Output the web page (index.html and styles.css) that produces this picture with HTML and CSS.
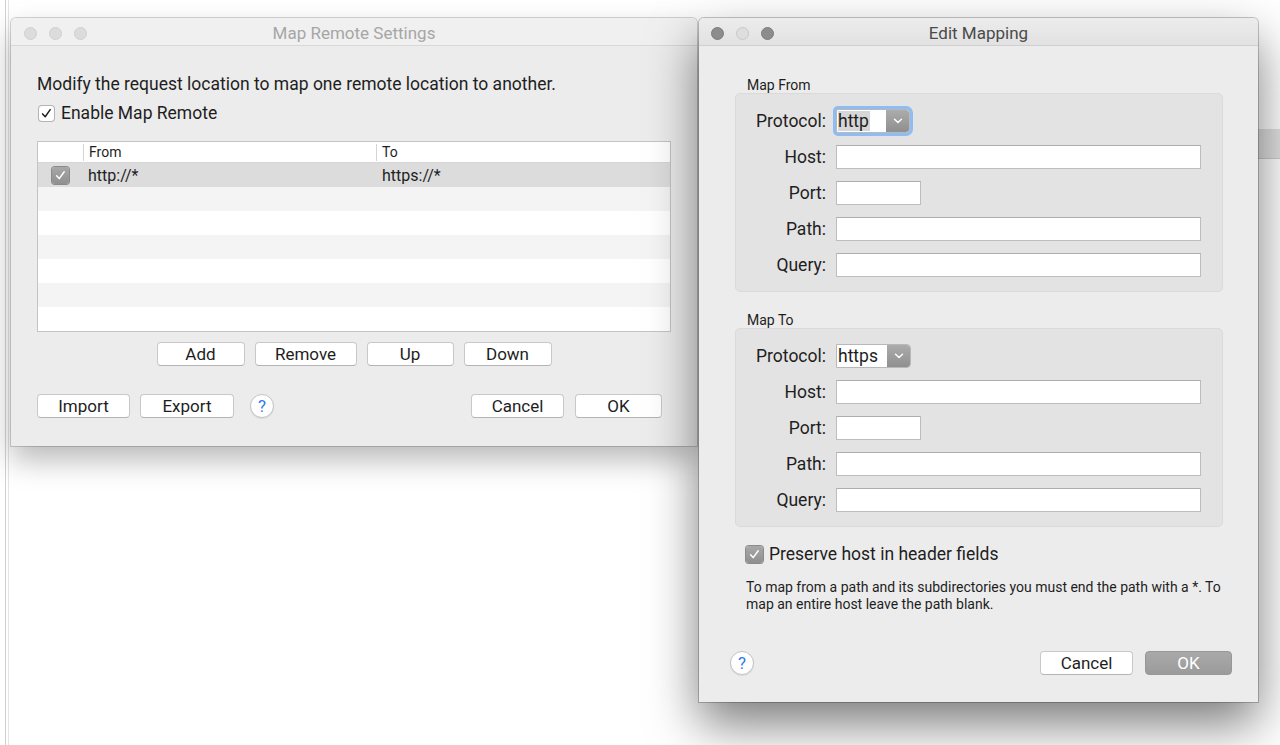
FILE: index.html
```html
<!DOCTYPE html>
<html>
<head>
    <meta charset="utf-8">
    <title>Map Remote Settings</title>
    <link rel="stylesheet" href="styles.css">
</head>
<body>
<div class="desktop">
    <div class="app-rail"></div>
    <div class="app-band"></div>

    <!-- back window -->
    <div class="window remote">
        <div class="titlebar inactive">
            <div class="lights"><span></span><span></span><span></span></div>
            <div class="title">Map Remote Settings</div>
            <div class="lights-spacer"></div>
        </div>
        <div class="content">
            <p class="intro">Modify the request location to map one remote location to another.</p>
            <div class="check">
                <span class="box plain">
                    <svg width="15" height="15" viewBox="0 0 15 15"><path d="M3.6 7.9 L6.2 10.7 L11.2 3.6" fill="none" stroke="#222" stroke-width="1.5" stroke-linecap="round" stroke-linejoin="round"/></svg>
                </span>
                <span>Enable Map Remote</span>
            </div>
            <div class="table">
                <div class="thead">
                    <div class="col-check"></div>
                    <div class="col-from">From</div>
                    <div class="col-to">To</div>
                </div>
                <div class="trow selected">
                    <div class="col-check">
                        <span class="box grey small">
                            <svg width="17" height="17" viewBox="0 0 17 17"><path d="M4.6 8.8 L7.2 11.6 L12.2 4.8" fill="none" stroke="#fff" stroke-width="1.5" stroke-linecap="round" stroke-linejoin="round"/></svg>
                        </span>
                    </div>
                    <div class="col-from">http://*</div>
                    <div class="col-to">https://*</div>
                </div>
                <div class="trow odd"></div>
                <div class="trow"></div>
                <div class="trow odd"></div>
                <div class="trow"></div>
                <div class="trow odd"></div>
                <div class="trow"></div>
            </div>
            <div class="list-buttons">
                <button class="btn w-add">Add</button>
                <button class="btn w-remove">Remove</button>
                <button class="btn w-up">Up</button>
                <button class="btn w-down">Down</button>
            </div>
            <div class="footer">
                <button class="btn w-import">Import</button>
                <button class="btn w-export">Export</button>
                <span class="help">?</span>
                <span class="grow"></span>
                <button class="btn w-cancel">Cancel</button>
                <button class="btn w-ok">OK</button>
            </div>
        </div>
    </div>

    <!-- front window -->
    <div class="window mapping">
        <div class="titlebar">
            <div class="lights modal"><span></span><span></span><span></span></div>
            <div class="title">Edit Mapping</div>
            <div class="lights-spacer"></div>
        </div>
        <div class="content">
            <div class="group-label first">Map From</div>
            <div class="group">
                <label>Protocol:</label>
                <div class="select focused">
                    <span class="value"><span class="hl">http</span></span>
                    <span class="arrow"><svg width="10" height="6" viewBox="0 0 10 6"><path d="M1.5 1.2 L5 4.6 L8.5 1.2" fill="none" stroke="#fff" stroke-width="1.4" stroke-linecap="round" stroke-linejoin="round"/></svg></span>
                </div>
                <label>Host:</label>
                <div class="field"></div>
                <label>Port:</label>
                <div class="field port"></div>
                <label>Path:</label>
                <div class="field"></div>
                <label>Query:</label>
                <div class="field"></div>
            </div>

            <div class="group-label">Map To</div>
            <div class="group">
                <label>Protocol:</label>
                <div class="select">
                    <span class="value">https</span>
                    <span class="arrow"><svg width="10" height="6" viewBox="0 0 10 6"><path d="M1.5 1.2 L5 4.6 L8.5 1.2" fill="none" stroke="#fff" stroke-width="1.4" stroke-linecap="round" stroke-linejoin="round"/></svg></span>
                </div>
                <label>Host:</label>
                <div class="field"></div>
                <label>Port:</label>
                <div class="field port"></div>
                <label>Path:</label>
                <div class="field"></div>
                <label>Query:</label>
                <div class="field"></div>
            </div>

            <div class="check preserve">
                <span class="box grey">
                    <svg width="17" height="17" viewBox="0 0 17 17"><path d="M4.6 8.8 L7.2 11.6 L12.2 4.8" fill="none" stroke="#fff" stroke-width="1.5" stroke-linecap="round" stroke-linejoin="round"/></svg>
                </span>
                <span>Preserve host in header fields</span>
            </div>
            <p class="note">To map from a path and its subdirectories you must end the path with a *. To map an entire host leave the path blank.</p>

            <div class="footer">
                <span class="help">?</span>
                <span class="grow"></span>
                <button class="btn w-cancel">Cancel</button>
                <button class="btn default w-ok2">OK</button>
            </div>
        </div>
    </div>
</div>
</body>
</html>
```

FILE: styles.css
```css
* {
    box-sizing: border-box;
}

html, body {
    margin: 0;
}

body {
    width: 1280px;
    height: 745px;
    overflow: hidden;
    background: #fff;
    font-family: Roboto, "Liberation Sans", sans-serif;
    font-size: 17.5px;
    color: #1e1e1e;
}

.desktop {
    position: relative;
    width: 1280px;
    height: 745px;
}

/* bits of the app behind the dialogs */
.app-rail {
    position: absolute;
    left: 5px;
    top: 0;
    bottom: 0;
    width: 4px;
    border-left: 1px solid #d2d2d2;
    border-right: 1px solid #e4e4e4;
}

.app-band {
    position: absolute;
    left: 700px;
    right: 0;
    top: 129px;
    height: 30px;
    background: #e2e2e2;
    border-bottom: 1px solid #cdcdcd;
}

/* windows */
.window {
    position: absolute;
    display: flex;
    flex-direction: column;
    background: #ececec;
    border-radius: 5px 5px 0 0;
}

.remote {
    left: 11px;
    top: 18px;
    width: 686px;
    height: 428px;
    z-index: 1;
    box-shadow: 0 0 0 1px rgba(0, 0, 0, 0.16), 0 14px 30px rgba(0, 0, 0, 0.28);
}

.mapping {
    left: 699px;
    top: 18px;
    width: 559px;
    height: 684px;
    z-index: 2;
    box-shadow: 0 0 0 1px rgba(0, 0, 0, 0.22), 0 22px 50px rgba(0, 0, 0, 0.52);
}

.titlebar {
    display: flex;
    align-items: center;
    height: 28px;
    padding-top: 3px;
    flex: none;
    border-bottom: 1px solid #cfcfcf;
    border-radius: 5px 5px 0 0;
    background: linear-gradient(#ececec, #e2e2e2);
}

.titlebar.inactive {
    background: #f0f0f0;
    border-bottom-color: #d8d8d8;
}

.lights, .lights-spacer {
    width: 90px;
    flex: none;
}

.lights {
    display: flex;
    gap: 12px;
    padding-left: 13px;
}

.lights span {
    width: 13px;
    height: 13px;
    border-radius: 50%;
    background: #dcdcdc;
    border: 1px solid #d0d0d0;
}

.lights.modal {
    padding-left: 12px;
}

.lights.modal span {
    background: #8c8c8c;
    border-color: #7c7c7c;
}

.lights.modal span:nth-child(2) {
    background: #dedede;
    border-color: #c8c8c8;
}

.title {
    flex: 1;
    text-align: center;
    font-size: 17px;
    line-height: 20px;
    color: #4a4a4a;
}

.inactive .title {
    color: #a6a6a6;
}

.content {
    flex: 1;
    display: flex;
    flex-direction: column;
}

.remote .content {
    padding: 28px 26px 28px 26px;
}

.mapping .content {
    padding: 31px 26px 27px 31px;
}

/* checkboxes */
.check {
    display: flex;
    align-items: center;
    gap: 7px;
    height: 20px;
}

.box {
    display: inline-flex;
    flex: none;
}

.box.plain {
    width: 15px;
    height: 15px;
    margin-left: 2px;
    background: #fff;
    border-radius: 3px;
    box-shadow: 0 0 0 1px #b4b4b4;
}

.box.grey {
    width: 17px;
    height: 17px;
    border-radius: 3px;
    background: linear-gradient(#a8a8a8, #8f8f8f);
    box-shadow: 0 0 0 1px #8a8a8a;
}

/* left window */
.intro {
    margin: 0 0 9px;
    line-height: 20px;
}

.table {
    margin-top: 18px;
    border: 1px solid #c4c4c4;
    background: #fff;
}

.thead, .trow {
    display: flex;
}

.thead {
    height: 21px;
    padding-top: 1px;
    border-bottom: 1px solid #d6d6d6;
    font-size: 14px;
    align-items: center;
}

.thead > div {
    height: 17px;
    line-height: 17px;
}

.thead .col-from, .thead .col-to {
    border-left: 1px solid #d4d4d4;
}

.col-check {
    width: 45px;
    flex: none;
    display: flex;
    justify-content: center;
}

.col-from {
    width: 293px;
    flex: none;
    padding-left: 5px;
}

.col-to {
    flex: 1;
    padding-left: 5px;
}

.trow {
    height: 24px;
    align-items: center;
    font-size: 16px;
}

.trow.odd {
    background: #f4f4f4;
}

.trow.selected {
    background: #dcdcdc;
}

.trow .col-to {
    padding-left: 6px;
}

.list-buttons {
    display: flex;
    justify-content: center;
    gap: 10px;
    margin-top: 10px;
}

.footer {
    display: flex;
    align-items: center;
    gap: 10px;
    margin-top: auto;
}

.remote .footer {
    margin-right: 9px;
}

.grow {
    flex: 1;
}

.btn {
    height: 24px;
    padding: 0;
    background: #fff;
    border: 1px solid #c8c8c8;
    border-bottom-color: #b4b4b4;
    border-radius: 4px;
    font-family: inherit;
    font-size: 17px;
    color: #1e1e1e;
    line-height: 22px;
    text-align: center;
}

.btn.default {
    background: linear-gradient(#a9a9a9, #9b9b9b);
    border-color: #979797;
    color: #fff;
}

.w-add { width: 88px; }
.w-remove { width: 102px; }
.w-up { width: 87px; }
.w-down { width: 88px; }
.w-import { width: 93px; }
.w-export { width: 94px; }
.w-cancel { width: 93px; }
.w-ok { width: 87px; margin-left: 1px; }
.w-ok2 { width: 87px; margin-left: 1px; }

.help {
    width: 24px;
    height: 24px;
    border-radius: 50%;
    background: #fff;
    border: 1px solid #c2c2c2;
    box-shadow: 0 1px 1px rgba(0, 0, 0, 0.08);
    color: #2f7cf0;
    font-size: 17px;
    line-height: 22px;
    text-align: center;
}

.remote .footer .help {
    margin-left: 6px;
}

/* right window */
.group-label {
    margin: 20px 0 0 17px;
    font-size: 14px;
    line-height: 16px;
}

.group-label.first {
    margin-top: 0;
}

.group {
    display: grid;
    grid-template-columns: 90px 1fr;
    column-gap: 10px;
    row-gap: 12px;
    align-items: center;
    margin: 0 9px 0 5px;
    padding: 15px 21px 14px 0;
    background: #e3e3e3;
    border: 1px solid #dadada;
    border-radius: 5px;
}

.group label {
    text-align: right;
    line-height: 24px;
}

.field {
    height: 24px;
    background: #fff;
    border: 1px solid #bdbdbd;
    border-top-color: #adadad;
}

.field.port {
    width: 85px;
}

.select {
    display: flex;
    width: 75px;
    height: 24px;
    border: 1px solid #b8b8b8;
    border-radius: 0 4px 4px 0;
    background: #fff;
}

.select.focused {
    width: 74px;
    box-shadow: 0 0 0 3px #8fbcf2;
    border-radius: 2px 4px 4px 2px;
}

.select .value {
    flex: 1;
    padding-left: 1px;
    line-height: 22px;
}

.select .hl {
    background: #d6d6d6;
    padding-right: 1px;
}

.select .arrow {
    width: 23px;
    display: flex;
    align-items: center;
    justify-content: center;
    background: linear-gradient(#acacac, #8f8f8f);
    border-radius: 0 3px 3px 0;
}

.preserve {
    margin: 18px 0 0 16px;
    height: 18px;
    gap: 6px;
}

.note {
    margin: 16px 0 0 16px;
    width: 484px;
    font-size: 14px;
    line-height: 17px;
}

.mapping .footer {
    gap: 11px;
}
```
